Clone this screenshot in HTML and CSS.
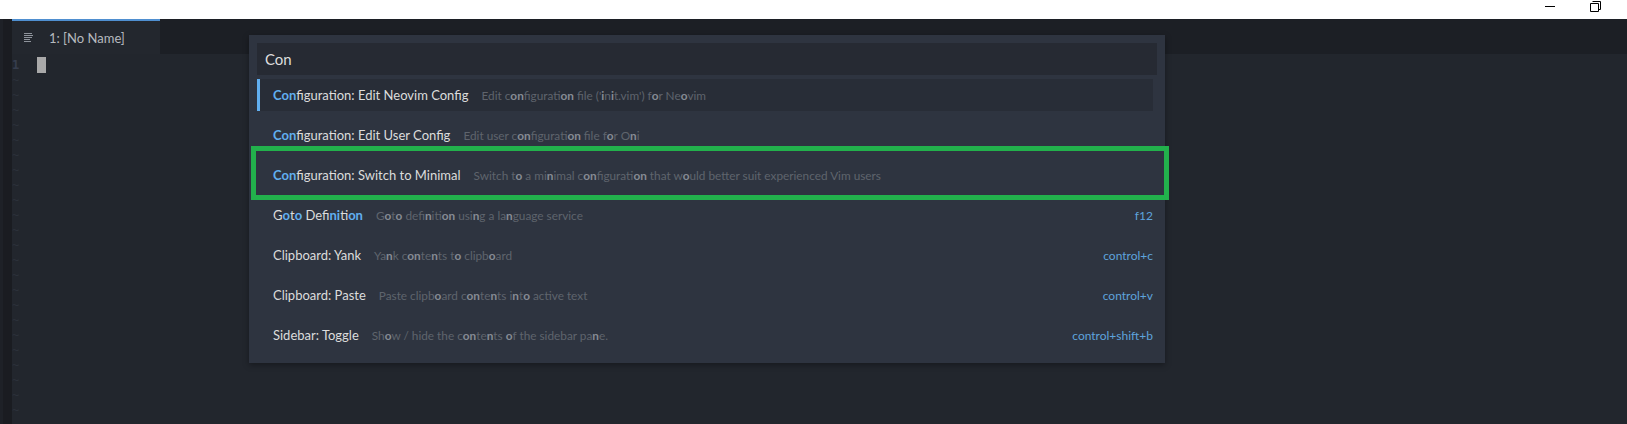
FILE: index.html
```html
<!DOCTYPE html>
<html>
<head>
<meta charset="utf-8">
<link rel="stylesheet" href="styles.css">
</head>
<body>
<div class="titlebar">
  <div class="winctl">
    <span class="minimize"></span>
    <svg class="restore" width="11" height="11" viewBox="0 0 11 11"><path d="M2.5 0.5h8v8h-2M0.5 2.5h8v8h-8z" fill="none" stroke="#000" stroke-width="1"/></svg>
  </div>
</div>
<div class="main">
  <div class="strip"><div class="strip-a"></div><div class="strip-b"></div></div>
  <div class="editor">
    <div class="tabbar">
      <div class="tab">
        <svg class="tabicon" width="9" height="9" viewBox="0 0 9 9"><path d="M0 0.5h8M0 2.5h9M0 4.5h8M0 6.5h6M0 8.5h7" stroke="#8f949c" stroke-width="1"/></svg>
        <span class="tabname">1: [No Name]</span>
      </div>
    </div>
    <div class="buffer">
      <div class="line"><span class="lnum">1</span><span class="cursor"></span></div>
      <div class="line"><span class="tilde">~</span></div>
      <div class="line"><span class="tilde">~</span></div>
      <div class="line"><span class="tilde">~</span></div>
      <div class="line"><span class="tilde">~</span></div>
      <div class="line"><span class="tilde">~</span></div>
      <div class="line"><span class="tilde">~</span></div>
      <div class="line"><span class="tilde">~</span></div>
      <div class="line"><span class="tilde">~</span></div>
      <div class="line"><span class="tilde">~</span></div>
      <div class="line"><span class="tilde">~</span></div>
      <div class="line"><span class="tilde">~</span></div>
      <div class="line"><span class="tilde">~</span></div>
      <div class="line"><span class="tilde">~</span></div>
      <div class="line"><span class="tilde">~</span></div>
      <div class="line"><span class="tilde">~</span></div>
      <div class="line"><span class="tilde">~</span></div>
      <div class="line"><span class="tilde">~</span></div>
      <div class="line"><span class="tilde">~</span></div>
      <div class="line"><span class="tilde">~</span></div>
      <div class="line"><span class="tilde">~</span></div>
      <div class="line"><span class="tilde">~</span></div>
      <div class="line"><span class="tilde">~</span></div>
      <div class="line"><span class="tilde">~</span></div>
    </div>
  </div>
</div>

<div class="palette">
  <div class="input">Con</div>
  <div class="list">
    <div class="row selected">
      <span class="title"><b>Con</b>figuration: Edit Neovim Config</span>
      <span class="desc">Edit c<b>on</b>figurati<b>on</b> file ('<b>i</b>n<b>i</b>t.vim') f<b>o</b>r Ne<b>o</b>vim</span>
    </div>
    <div class="row">
      <span class="title"><b>Con</b>figuration: Edit User Config</span>
      <span class="desc">Edit user c<b>on</b>figurati<b>on</b> file f<b>o</b>r O<b>n</b>i</span>
    </div>
    <div class="row">
      <span class="title"><b>Con</b>figuration: Switch to Minimal</span>
      <span class="desc">Switch t<b>o</b> a mi<b>n</b>imal c<b>on</b>figurati<b>on</b> that w<b>o</b>uld better suit experienced Vim users</span>
    </div>
    <div class="row">
      <span class="title">G<b>o</b>t<b>o</b> Defi<b>ni</b>ti<b>on</b></span>
      <span class="desc">G<b>o</b>t<b>o</b> defi<b>n</b>iti<b>on</b> usi<b>n</b>g a la<b>n</b>guage service</span>
      <span class="key">f12</span>
    </div>
    <div class="row">
      <span class="title">Clipboard: Yank</span>
      <span class="desc">Ya<b>n</b>k c<b>on</b>te<b>n</b>ts t<b>o</b> clipb<b>o</b>ard</span>
      <span class="key">control+c</span>
    </div>
    <div class="row">
      <span class="title">Clipboard: Paste</span>
      <span class="desc">Paste clipb<b>o</b>ard c<b>on</b>te<b>n</b>ts i<b>n</b>t<b>o</b> active text</span>
      <span class="key">control+v</span>
    </div>
    <div class="row">
      <span class="title">Sidebar: Toggle</span>
      <span class="desc">Sh<b>o</b>w / hide the c<b>on</b>te<b>n</b>ts <b>o</b>f the sidebar pa<b>n</b>e.</span>
      <span class="key">control+shift+b</span>
    </div>
  </div>
</div>
<div class="annot"></div>
</body>
</html>
```
FILE: styles.css
```css
html, body {
  margin: 0;
  padding: 0;
}
body {
  width: 1627px;
  height: 424px;
  overflow: hidden;
  background: #22262d;
  font-family: "Lato", "Noto Sans", sans-serif;
}
.titlebar {
  height: 19px;
  background: #ffffff;
  display: flex;
  justify-content: flex-end;
}
.winctl {
  display: flex;
  align-items: flex-start;
  padding-right: 26px;
}
.minimize {
  width: 10px;
  height: 1px;
  background: #000;
  margin-top: 6px;
  margin-right: 35px;
}
.restore {
  margin-top: 1px;
  display: block;
}
.main {
  display: flex;
  height: 405px;
}
.strip {
  display: flex;
}
.strip-a {
  width: 3px;
  background: #1e2127;
}
.strip-b {
  width: 9px;
  background: #1a1c21;
}
.editor {
  flex: 1;
  display: flex;
  flex-direction: column;
}
.tabbar {
  height: 35px;
  background: #1c1f25;
  display: flex;
}
.tab {
  width: 148px;
  box-sizing: border-box;
  border-top: 2px solid #4f8fd0;
  background: #23272e;
  display: flex;
  align-items: center;
  padding-left: 12px;
}
.tabicon {
  display: block;
  margin-right: 16px;
}
.tabname {
  color: #b6b9be;
  font-size: 13px;
}
.buffer {
  padding-top: 3px;
}
.line {
  height: 15px;
  display: flex;
  align-items: center;
  font-family: "DejaVu Sans Mono", monospace;
  font-size: 12px;
}
.lnum {
  width: 25px;
  color: #363d4d;
  font-weight: bold;
}
.tilde {
  color: #2c313a;
}
.cursor {
  width: 9px;
  height: 16px;
  background: #a9a9a9;
}
.palette {
  position: absolute;
  left: 249px;
  top: 35px;
  width: 916px;
  height: 328px;
  box-sizing: border-box;
  padding: 8px 8px 0 8px;
  background: #2e3440;
  box-shadow: 0 2px 6px rgba(0, 0, 0, 0.35);
}
.input {
  height: 32px;
  background: #262a33;
  color: #dedede;
  font-size: 15px;
  display: flex;
  align-items: center;
  padding-left: 8px;
}
.list {
  margin-top: 4px;
  margin-right: 4px;
  display: flex;
  flex-direction: column;
  gap: 8px;
}
.row {
  height: 32px;
  display: flex;
  align-items: center;
  padding-left: 16px;
  box-sizing: border-box;
}
.row.selected {
  background: #282d37;
  border-left: 3px solid #61aff0;
  padding-left: 13px;
}
.title {
  color: #dcdcdc;
  font-size: 13px;
  white-space: nowrap;
}
.title b {
  color: #61aff0;
  font-weight: bold;
}
.desc {
  margin-left: 13px;
  color: #5f646d;
  font-size: 11.8px;
  white-space: nowrap;
  flex: 1;
}
.desc b {
  color: #868b94;
  font-weight: bold;
}
.key {
  color: #5ea3dc;
  font-size: 12px;
}
.annot {
  position: absolute;
  left: 251px;
  top: 146px;
  width: 918px;
  height: 54px;
  box-sizing: border-box;
  border: 5px solid #22b14c;
}
```
